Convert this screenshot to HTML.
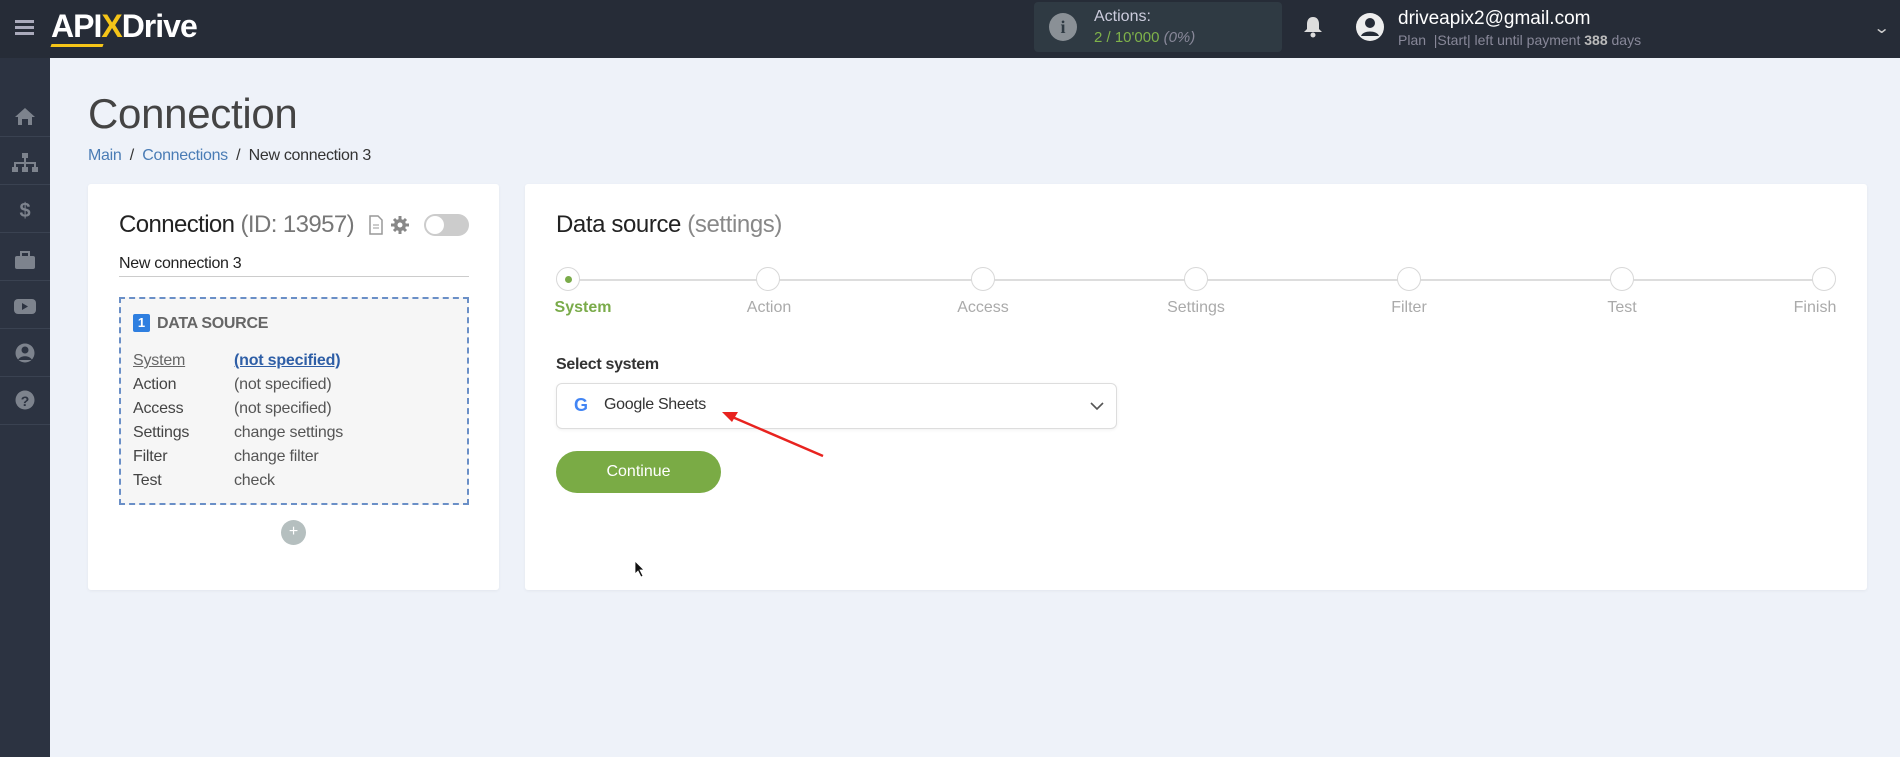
<!DOCTYPE html>
<html><head><meta charset="utf-8">
<style>
*{margin:0;padding:0;box-sizing:border-box}
body{width:1900px;height:757px;overflow:hidden;background:#eef2f9;font-family:"Liberation Sans",sans-serif;position:relative}
.abs{position:absolute}
#top{left:0;top:0;width:1900px;height:58px;background:#262c37}
#side{left:0;top:58px;width:50px;height:699px;background:#2c3341}
.sep{position:absolute;left:0;width:50px;height:1px;background:#3a4251}
.card{background:#fff;border-radius:3px;box-shadow:0 1px 3px rgba(0,0,0,.05)}
.lbl{position:absolute;left:133px;font-size:16px;color:#444;letter-spacing:-.2px}
.val{position:absolute;left:234px;font-size:16px;color:#555;letter-spacing:-.2px}
.step{position:absolute;width:24px;height:24px;border:1.5px solid #d8d8d8;border-radius:50%;background:#fff;top:267px}
.sl{position:absolute;top:299px;font-size:16px;color:#aaa;transform:translateX(-50%)}
</style></head><body>
<div id="top" class="abs"></div>
<div class="abs" style="left:15px;top:20px;width:19px;height:3px;background:#aab;box-shadow:0 6px 0 #aab,0 12px 0 #aab"></div>
<div class="abs" style="left:51px;top:8px;font-size:32px;font-weight:bold;color:#fff;letter-spacing:-1px">API<span style="color:#f5c518">X</span>Drive</div>
<div class="abs" style="left:51px;top:44px;width:52px;height:3px;background:#f5c518;transform:skewX(-20deg)"></div>

<div class="abs" style="left:1034px;top:2px;width:248px;height:50px;background:#2f3a43;border-radius:4px"></div>
<div class="abs" style="left:1049px;top:13px;width:28px;height:28px;border-radius:50%;background:#8a9096;color:#2f3a43;font-weight:bold;font-size:18px;text-align:center;line-height:28px;font-family:'Liberation Serif',serif">i</div>
<div class="abs" style="left:1094px;top:8px;font-size:16px;color:#ccd">Actions:</div>
<div class="abs" style="left:1094px;top:29px;font-size:15px;color:#7fb24a">2 / 10'000 <i style="color:#889">(0%)</i></div>
<svg class="abs" style="left:1302px;top:15px" width="22" height="24" viewBox="0 0 22 24"><path d="M11 2c-4 0-6 3-6 7v5l-3 3h18l-3-3V9c0-4-2-7-6-7z" fill="#ddd"/><circle cx="11" cy="20" r="2.5" fill="#ddd"/></svg>
<svg class="abs" style="left:1355px;top:12px" width="30" height="30" viewBox="0 0 30 30"><circle cx="15" cy="15" r="14" fill="#eee"/><circle cx="15" cy="11" r="5" fill="#262c37"/><path d="M6 24c2-6 16-6 18 0" fill="#262c37"/></svg>
<div class="abs" style="left:1398px;top:8px;font-size:19px;color:#fff">driveapix2@gmail.com</div>
<div class="abs" style="left:1398px;top:32px;font-size:14px;color:#889">Plan &nbsp;|Start| left until payment <b style="color:#bbb">388</b> days</div>
<div class="abs" style="left:1875px;top:18px;color:#ccc;font-size:16px;transform:scaleX(1.3)">&#8964;</div>

<div id="side" class="abs">
<div class="sep" style="top:78px"></div><div class="sep" style="top:126px"></div><div class="sep" style="top:174px"></div><div class="sep" style="top:222px"></div><div class="sep" style="top:270px"></div><div class="sep" style="top:318px"></div><div class="sep" style="top:366px"></div>
</div>
<svg class="abs" style="left:0;top:90px" width="50" height="330" viewBox="0 0 50 330" fill="#7d838d">
<path d="M15 27l10-9 10 9h-3v8h-4v-6h-6v6h-4v-8z"/>
<rect x="22" y="63" width="6" height="5"/><rect x="14" y="72" width="22" height="2"/><rect x="14" y="72" width="2" height="5"/><rect x="24" y="68" width="2" height="9"/><rect x="34" y="72" width="2" height="5"/><rect x="12" y="77" width="6" height="5"/><rect x="22" y="77" width="6" height="5"/><rect x="32" y="77" width="6" height="5"/>
<text x="25" y="127" font-size="20" font-weight="bold" text-anchor="middle" font-family="Liberation Sans">$</text>
<rect x="15" y="166" width="20" height="13" rx="2"/><rect x="21" y="162" width="8" height="5" fill="none" stroke="#7d838d" stroke-width="2"/>
<rect x="14" y="209" width="22" height="15" rx="4"/><path d="M22 213l6 3.5-6 3.5z" fill="#2c3341"/>
<circle cx="25" cy="263" r="9.5"/><circle cx="25" cy="260" r="3.5" fill="#2c3341"/><path d="M18 270c2-5 12-5 14 0" fill="#2c3341"/>
<circle cx="25" cy="310" r="9.5"/><text x="25" y="316" font-size="14" font-weight="bold" text-anchor="middle" fill="#2c3341" font-family="Liberation Sans">?</text>
</svg>

<div class="abs" style="left:88px;top:90px;font-size:42px;color:#444;letter-spacing:-.3px">Connection</div>
<div class="abs" style="left:88px;top:147px;font-size:16px;color:#333;letter-spacing:-.3px"><span style="color:#4a7cb5">Main</span> &nbsp;/&nbsp; <span style="color:#4a7cb5">Connections</span> &nbsp;/&nbsp; New connection 3</div>

<div class="abs card" style="left:88px;top:184px;width:411px;height:406px"></div>
<div class="abs" style="left:119px;top:211px;font-size:24px;color:#222;letter-spacing:-.6px">Connection <span style="color:#777">(ID: 13957)</span></div>
<svg class="abs" style="left:368px;top:215px" width="44" height="20"><path d="M2 1h8l4 4v14H2z" fill="none" stroke="#999" stroke-width="1.5"/><path d="M5 10h6M5 13h6" stroke="#999"/><path d="M32 1v18M23 10h18M26 4l12 12M38 4L26 16" stroke="#888" stroke-width="3"/><circle cx="32" cy="10" r="6" fill="#888"/><circle cx="32" cy="10" r="2.5" fill="#fff"/></svg>
<div class="abs" style="left:424px;top:214px;width:45px;height:22px;border-radius:11px;background:#ccc"></div>
<div class="abs" style="left:426px;top:216px;width:18px;height:18px;border-radius:50%;background:#fff"></div>
<div class="abs" style="left:119px;top:255px;font-size:16px;color:#222;letter-spacing:-.3px">New connection 3</div>
<div class="abs" style="left:119px;top:276px;width:350px;height:1px;background:#ccc"></div>
<div class="abs" style="left:119px;top:297px;width:350px;height:208px;border:2px dashed #6a8fc7;background:#f6f6f6"></div>
<div class="abs" style="left:133px;top:314px;width:17px;height:18px;background:#2f7fe0;color:#fff;font-size:13px;font-weight:bold;text-align:center;line-height:18px;border-radius:2px">1</div>
<div class="abs" style="left:157px;top:315px;font-size:16px;font-weight:bold;color:#666;letter-spacing:-.3px">DATA SOURCE</div>
<div class="lbl" style="top:352px;text-decoration:underline;color:#666">System</div><div class="val" style="top:352px;color:#2e5ea6;font-weight:bold;text-decoration:underline">(not specified)</div>
<div class="lbl" style="top:376px">Action</div><div class="val" style="top:376px">(not specified)</div>
<div class="lbl" style="top:400px">Access</div><div class="val" style="top:400px">(not specified)</div>
<div class="lbl" style="top:424px">Settings</div><div class="val" style="top:424px">change settings</div>
<div class="lbl" style="top:448px">Filter</div><div class="val" style="top:448px">change filter</div>
<div class="lbl" style="top:472px">Test</div><div class="val" style="top:472px">check</div>
<div class="abs" style="left:281px;top:520px;width:25px;height:25px;border-radius:50%;background:#b5bfbf;color:#fff;text-align:center;line-height:24px;font-size:16px">+</div>

<div class="abs card" style="left:525px;top:184px;width:1342px;height:406px"></div>
<div class="abs" style="left:556px;top:211px;font-size:24px;color:#222;letter-spacing:-.4px">Data source <span style="color:#888">(settings)</span></div>
<div class="abs" style="left:570px;top:279px;width:1254px;height:1.5px;background:#ddd"></div>
<div class="step" style="left:556px"></div><div class="abs" style="left:565px;top:276px;width:7px;height:7px;border-radius:50%;background:#7aab4a"></div>
<div class="step" style="left:756px"></div><div class="step" style="left:971px"></div><div class="step" style="left:1184px"></div><div class="step" style="left:1397px"></div><div class="step" style="left:1610px"></div><div class="step" style="left:1812px"></div>
<div class="sl" style="left:583px;color:#7aab4a;font-weight:bold">System</div>
<div class="sl" style="left:769px">Action</div>
<div class="sl" style="left:983px">Access</div>
<div class="sl" style="left:1196px">Settings</div>
<div class="sl" style="left:1409px">Filter</div>
<div class="sl" style="left:1622px">Test</div>
<div class="sl" style="left:1815px">Finish</div>
<div class="abs" style="left:556px;top:356px;font-size:16px;font-weight:bold;color:#333;letter-spacing:-.3px">Select system</div>
<div class="abs" style="left:556px;top:383px;width:561px;height:46px;border:1px solid #ddd;border-radius:6px;background:#fff;box-shadow:0 1px 3px rgba(0,0,0,.06)"></div>
<div class="abs" style="left:574px;top:395px;font-size:18px;font-weight:bold;color:#4285f4">G</div>
<div class="abs" style="left:604px;top:396px;font-size:16px;color:#333;letter-spacing:-.3px">Google Sheets</div>
<svg class="abs" style="left:1089px;top:400px" width="16" height="12"><path d="M2 3l6 6 6-6" stroke="#555" stroke-width="1.6" fill="none"/></svg>
<div class="abs" style="left:556px;top:451px;width:165px;height:42px;border-radius:21px;background:#7aab45;color:#fff;font-size:16px;text-align:center;line-height:42px">Continue</div>
<svg class="abs" style="left:700px;top:400px" width="140" height="70"><line x1="123" y1="56" x2="30" y2="16" stroke="#e8231f" stroke-width="2.5"/><path d="M22 12l16 0-6 10z" fill="#e8231f"/></svg>
<svg class="abs" style="left:634px;top:560px" width="12" height="18"><path d="M1 1v13l3-3 3 6 2-1-3-6h4z" fill="#111" stroke="#fff" stroke-width=".8"/></svg>
</body></html>
